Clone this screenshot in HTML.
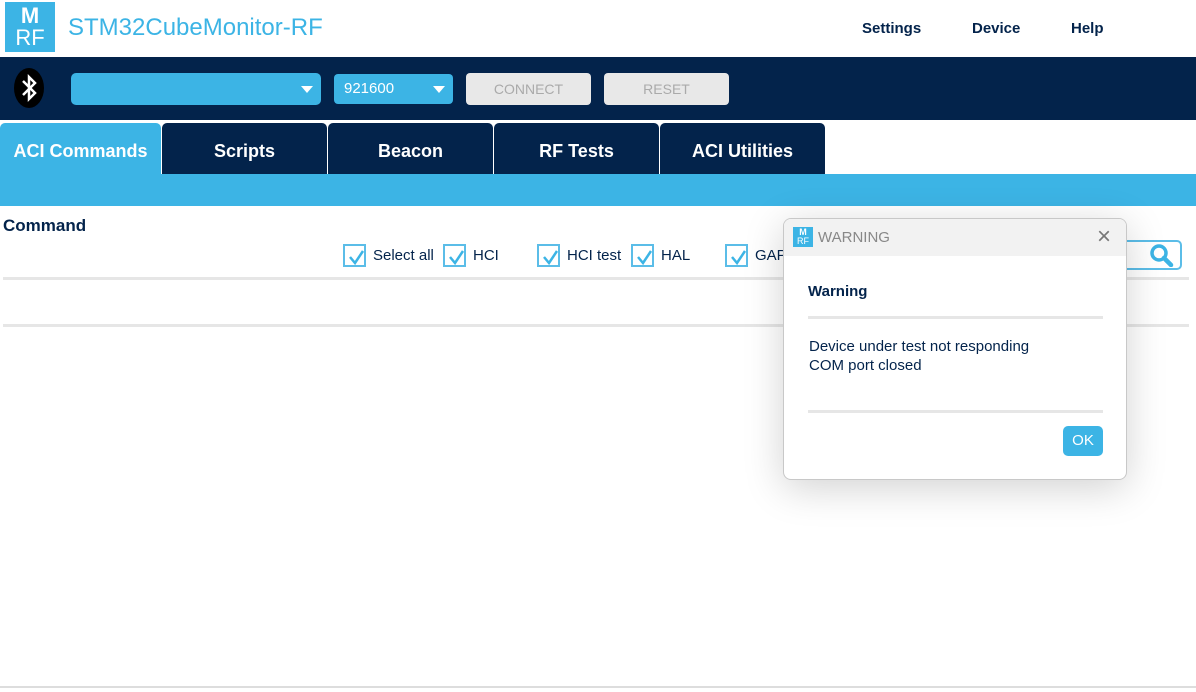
<!DOCTYPE html><html><head><style>
*{margin:0;padding:0;box-sizing:border-box}
body{width:1196px;height:692px;overflow:hidden;background:#fff;font-family:"Liberation Sans",sans-serif;position:relative}
.a{position:absolute}
.tab{position:absolute;top:123px;height:51px;width:165px;background:#03234b;color:#fff;font-weight:bold;font-size:18px;text-align:center;line-height:56px;border-radius:5px 5px 0 0}
.cb{position:absolute;top:244px;width:23px;height:23px;border:2px solid #5bbde8;background:#fff}
.cb svg{position:absolute;left:3px;top:3px}
.lb{position:absolute;top:247px;font-size:15px;color:#03234b}
</style></head><body>
<div class="a" style="left:5px;top:2px;width:50px;height:50px;background:#3cb4e5;color:#fff;text-align:center;font-size:22px;line-height:22px;padding-top:3px"><b>M</b><br>RF</div>
<div class="a" style="left:68px;top:14px;font-size:24px;color:#3cb4e5">STM32CubeMonitor-RF</div>
<div class="a" style="left:862px;top:20px;font-size:15px;font-weight:bold;color:#03234b">Settings</div>
<div class="a" style="left:972px;top:20px;font-size:15px;font-weight:bold;color:#03234b">Device</div>
<div class="a" style="left:1071px;top:20px;font-size:15px;font-weight:bold;color:#03234b">Help</div>
<div class="a" style="left:0;top:57px;width:1196px;height:63px;background:#03234b"></div>
<div class="a" style="left:14px;top:68px;width:30px;height:40px;background:#000;border-radius:50%"></div>
<svg class="a" style="left:14px;top:68px" width="30" height="40"><path d="M9 13 L21 25 L15 31 V9 L21 15 L9 27" stroke="#fff" stroke-width="2.5" fill="none"/></svg>
<div class="a" style="left:71px;top:73px;width:250px;height:32px;background:#3cb4e5;border-radius:5px"></div>
<div class="a" style="left:301px;top:86px;border:6px solid transparent;border-top:7px solid #fff"></div>
<div class="a" style="left:334px;top:74px;width:119px;height:30px;background:#3cb4e5;border-radius:4px;color:#fff;font-size:15px;line-height:30px;padding-left:10px">921600</div>
<div class="a" style="left:433px;top:86px;border:6px solid transparent;border-top:7px solid #fff"></div>
<div class="a" style="left:466px;top:73px;width:125px;height:32px;background:#e8e8e8;border-radius:4px;color:#aaa;font-size:14px;text-align:center;line-height:32px">CONNECT</div>
<div class="a" style="left:604px;top:73px;width:125px;height:32px;background:#e8e8e8;border-radius:4px;color:#aaa;font-size:14px;text-align:center;line-height:32px">RESET</div>
<div class="tab" style="left:0;width:161px;background:#3cb4e5">ACI Commands</div>
<div class="tab" style="left:162px">Scripts</div>
<div class="tab" style="left:328px">Beacon</div>
<div class="tab" style="left:494px">RF Tests</div>
<div class="tab" style="left:660px">ACI Utilities</div>
<div class="a" style="left:0;top:174px;width:1196px;height:32px;background:#3cb4e5"></div>
<div class="a" style="left:3px;top:216px;font-size:17px;font-weight:bold;color:#03234b">Command</div>
<div class="cb" style="left:343px"><svg width="17" height="17"><path d="M2 8 L7 14 L15 2" stroke="#3cb4e5" stroke-width="2.5" fill="none"/></svg></div><div class="lb" style="left:373px">Select all</div>
<div class="cb" style="left:443px"><svg width="17" height="17"><path d="M2 8 L7 14 L15 2" stroke="#3cb4e5" stroke-width="2.5" fill="none"/></svg></div><div class="lb" style="left:473px">HCI</div>
<div class="cb" style="left:537px"><svg width="17" height="17"><path d="M2 8 L7 14 L15 2" stroke="#3cb4e5" stroke-width="2.5" fill="none"/></svg></div><div class="lb" style="left:567px">HCI test</div>
<div class="cb" style="left:631px"><svg width="17" height="17"><path d="M2 8 L7 14 L15 2" stroke="#3cb4e5" stroke-width="2.5" fill="none"/></svg></div><div class="lb" style="left:661px">HAL</div>
<div class="cb" style="left:725px"><svg width="17" height="17"><path d="M2 8 L7 14 L15 2" stroke="#3cb4e5" stroke-width="2.5" fill="none"/></svg></div><div class="lb" style="left:755px">GAP</div>
<div class="a" style="left:1100px;top:240px;width:82px;height:30px;border:2px solid #5bbde8;border-radius:5px"></div>
<svg class="a" style="left:1149px;top:243px" width="26" height="24"><circle cx="10" cy="10" r="7" stroke="#3cb4e5" stroke-width="3.5" fill="none"/><path d="M15 15 L22 22" stroke="#3cb4e5" stroke-width="4.5" stroke-linecap="round"/></svg>
<div class="a" style="left:3px;top:277px;width:1186px;height:3px;background:#e6e6e6"></div>
<div class="a" style="left:3px;top:324px;width:1186px;height:3px;background:#e6e6e6"></div>
<div class="a" style="left:0;top:686px;width:1196px;height:2px;background:#ddd"></div>
<div class="a" style="left:783px;top:218px;width:344px;height:262px;background:#fff;border:1px solid #c8c8c8;border-radius:8px;box-shadow:0 8px 40px rgba(0,0,0,.18);overflow:hidden">
<div style="height:37px;background:#f2f2f2;position:relative">
<div class="a" style="left:9px;top:8px;width:20px;height:20px;background:#3cb4e5;color:#fff;font-size:9px;line-height:9px;text-align:center;padding-top:1px"><b>M</b><br>RF</div>
<div class="a" style="left:34px;top:10px;font-size:15px;color:#888">WARNING</div>
<div class="a" style="left:313px;top:4px;font-size:24px;color:#777">×</div>
</div>
<div class="a" style="left:24px;top:64px;font-size:15px;font-weight:bold;color:#03234b">Warning</div>
<div class="a" style="left:24px;top:97px;width:295px;height:3px;background:#e6e6e6"></div>
<div class="a" style="left:25px;top:118px;font-size:15px;line-height:19px;color:#03234b">Device under test not responding<br>COM port closed</div>
<div class="a" style="left:24px;top:191px;width:295px;height:3px;background:#e6e6e6"></div>
<div class="a" style="left:279px;top:207px;width:40px;height:30px;background:#3cb4e5;border-radius:5px;color:#fff;font-size:15px;text-align:center;line-height:30px">OK</div>
</div>
</body></html>
